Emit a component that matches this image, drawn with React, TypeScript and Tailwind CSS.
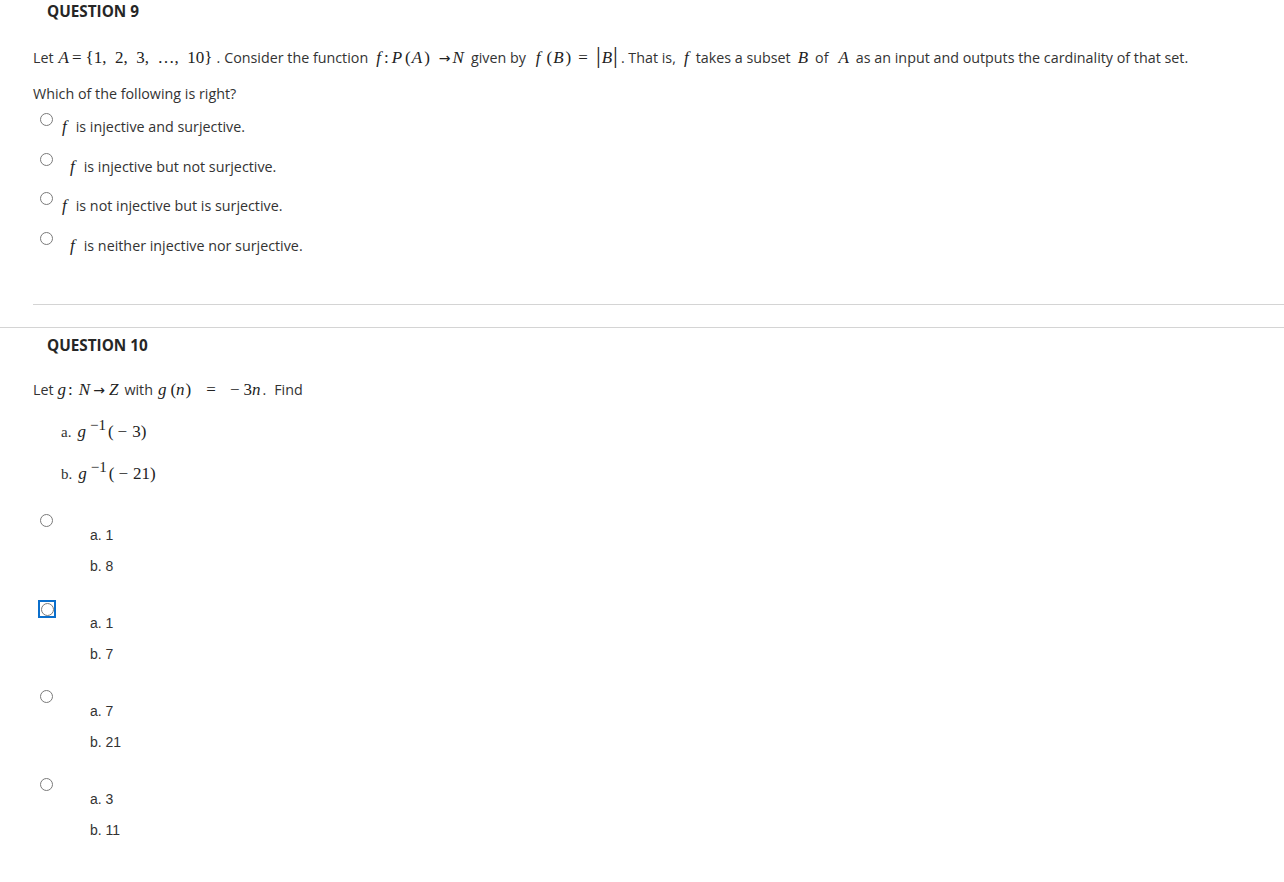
import React from "react";

const serif = "font-['Liberation_Serif',serif]";

function M({ children, i = false, cls = "" }: { children: React.ReactNode; i?: boolean; cls?: string }) {
  return <span className={`${serif} text-[17px] text-[#222] ${i ? "italic" : ""} ${cls}`}>{children}</span>;
}

// long arrow as in the typeset formula
function Arrow({ cls = "" }: { cls?: string }) {
  return <span className={`font-['DejaVu_Sans',sans-serif] text-[14px] text-[#222] ${cls}`}>→</span>;
}

function Radio({ focused = false }: { focused?: boolean }) {
  if (focused) {
    return (
      <span className="flex h-[18px] w-[18px] items-center justify-center border-2 border-[#0b6fcc]">
        <span className="block h-[13px] w-[13px] rounded-full border border-[#7a7a7a] bg-white" />
      </span>
    );
  }
  return <span className="block h-[13px] w-[13px] rounded-full border border-[#7a7a7a] bg-white" />;
}

function Q9Option({ gap, children }: { gap: string; children: React.ReactNode }) {
  return (
    <div className="flex h-[39.6px] items-start pl-[40px]">
      <div className="mt-[5px]">
        <Radio />
      </div>
      <div className={`mt-[9px] leading-[20px] ${gap}`}>
        <M i cls="text-[16px] mr-[9px]">f</M>
        {children}
      </div>
    </div>
  );
}

function Q10Option({ a, b, focused = false }: { a: string; b: string; focused?: boolean }) {
  return (
    <div className="relative flex h-[88px] items-start">
      <div className={focused ? "ml-[38px] mt-[2px]" : "ml-[40px] mt-[4px]"}>
        <Radio focused={focused} />
      </div>
      <div className="absolute left-[90px] top-[15px] font-['Liberation_Sans',Arial,sans-serif] text-[14px] leading-[20px] text-[#333]">
        <div>a. {a}</div>
        <div className="mt-[11px]">b. {b}</div>
      </div>
    </div>
  );
}

function Inverse({ label, arg }: { label: string; arg: string }) {
  return (
    <div className={`${serif} text-[17px] leading-[22px] text-[#222]`}>
      <span className="text-[15px] text-[#333]">{label}</span>
      <span className="ml-[6px] italic">g</span>
      <span className="relative -top-[7px] ml-[4px] text-[15px]">−1</span>
      <span className="ml-[2px]">(</span>
      <span className="ml-[4px]">−</span>
      <span className="ml-[5px]">{arg}</span>
      <span>)</span>
    </div>
  );
}

export default function App() {
  return (
    <div className="min-h-[882px] bg-white font-['Open_Sans',sans-serif] text-[14.3px] text-[#333]">
      {/* Question 9 */}
      <div className="pl-[47px] pt-[1px] text-[15.3px] font-bold leading-[20px] text-[#262626]">QUESTION 9</div>
      <p className="mt-[25px] whitespace-nowrap pl-[33px] leading-[22px]">
        Let
        <M i cls="ml-[5px]">A</M>
        <M cls="ml-[3px]">=</M>
        <M cls="ml-[4px]">{"{"}1,&ensp;2,&ensp;3,&ensp;…,&ensp;10{"}"}</M>
        <span className="ml-[4px]">.</span>
        <span className="ml-[4px]">Consider the function</span>
        <M i cls="ml-[8px]">f</M>
        <M cls="ml-[3px]">:</M>
        <M i cls="ml-[3px]">P</M>
        <M cls="ml-[3px]">(</M>
        <M i cls="ml-[1px]">A</M>
        <M cls="ml-[2px]">)</M>
        <Arrow cls="ml-[9px]" />
        <M i cls="ml-[2px]">N</M>
        <span className="ml-[7px]">given by</span>
        <M i cls="ml-[10px]">f</M>
        <M cls="ml-[6px]">(</M>
        <M i cls="ml-[1px]">B</M>
        <M cls="ml-[2px]">)</M>
        <M cls="ml-[7px]">=</M>
        <span className={`${serif} ml-[8px] text-[24px] leading-[18px] text-[#222]`}>|</span>
        <M i cls="ml-[1px]">B</M>
        <span className={`${serif} ml-[1px] text-[24px] leading-[18px] text-[#222]`}>|</span>
        <span className="ml-[3px]">. That is,</span>
        <M i cls="ml-[8px]">f</M>
        <span className="ml-[7px]">takes a subset</span>
        <M i cls="ml-[7px]">B</M>
        <span className="ml-[7px]">of</span>
        <M i cls="ml-[10px]">A</M>
        <span className="ml-[7px]">as an input and outputs the cardinality of that set.</span>
      </p>
      <p className="mt-[15px] pl-[33px] leading-[20px]">Which of the following is right?</p>
      <div className="mt-[4px]">
        <Q9Option gap="ml-[9px]">is injective and surjective.</Q9Option>
        <Q9Option gap="ml-[17px]">is injective but not surjective.</Q9Option>
        <Q9Option gap="ml-[9px]">is not injective but is surjective.</Q9Option>
        <Q9Option gap="ml-[17px]">is neither injective nor surjective.</Q9Option>
      </div>

      <div className="mt-[38px] ml-[33px] h-px bg-[#d4d4d4]" />
      <div className="mt-[22px] h-px bg-[#d4d4d4]" />

      {/* Question 10 */}
      <div className="mt-[7px] pl-[47px] text-[15.3px] font-bold leading-[20px] text-[#262626]">QUESTION 10</div>
      <p className="mt-[24px] whitespace-nowrap pl-[33px] leading-[22px]">
        Let
        <M i cls="ml-[4px]">g</M>
        <M cls="ml-[2px]">:</M>
        <M i cls="ml-[6px]">N</M>
        <Arrow cls="ml-[3px]" />
        <M i cls="ml-[4px]">Z</M>
        <span className="ml-[6px]">with</span>
        <M i cls="ml-[5px]">g</M>
        <M cls="ml-[4px]">(</M>
        <M i>n</M>
        <M cls="ml-[1px]">)</M>
        <M cls="ml-[15px]">=</M>
        <M cls="ml-[14px]">−</M>
        <M cls="ml-[4px]">3</M>
        <M i>n</M>
        <span className="ml-[2px]">.</span>
        <span className="ml-[8px]">Find</span>
      </p>
      <div className="mt-[20px] pl-[61px]">
        <Inverse label="a." arg="3" />
        <div className="mt-[20px]">
          <Inverse label="b." arg="21" />
        </div>
      </div>
      <div className="mt-[25px]">
        <Q10Option a="1" b="8" />
        <Q10Option a="1" b="7" focused />
        <Q10Option a="7" b="21" />
        <Q10Option a="3" b="11" />
      </div>
    </div>
  );
}
